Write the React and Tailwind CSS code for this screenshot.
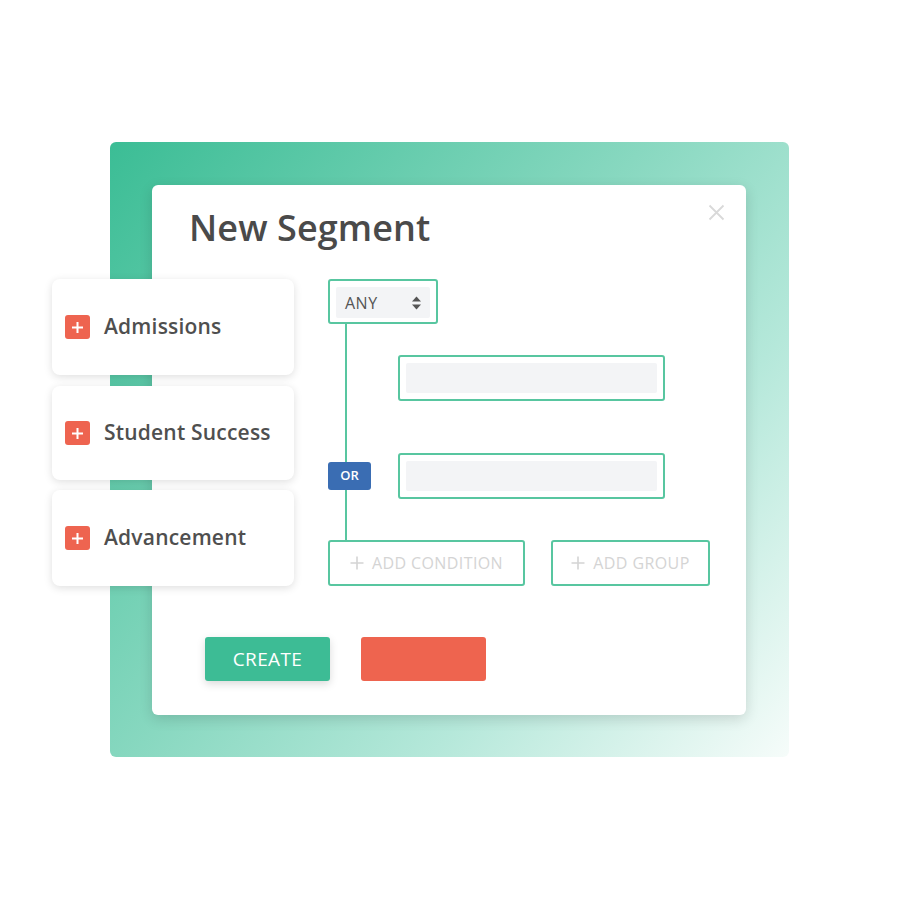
import React from "react";

function PlusBox() {
  return (
    <div className="w-[25px] h-[24px] rounded-[3px] bg-[#ee6450] flex items-center justify-center shrink-0">
      <svg width="13" height="13" viewBox="0 0 13 13">
        <path d="M6.5 1v11M1 6.5h11" stroke="white" strokeWidth="2" strokeLinecap="butt" />
      </svg>
    </div>
  );
}

function Card({ label, h }) {
  return (
    <div
      className={`w-[242px] ${h} bg-white rounded-[8px] shadow-[0_2px_8px_rgba(0,0,0,0.13)] flex items-center pl-[13px] gap-[14px]`}
    >
      <PlusBox />
      <span className="text-[21px] font-semibold text-[#4f4f4f] tracking-[0.2px]">{label}</span>
    </div>
  );
}

function CondBox() {
  return (
    <div className="w-[267px] h-[46px] border-2 border-[#58c6a0] rounded-[3px] p-[6px] bg-white">
      <div className="w-full h-full bg-[#f3f4f6] rounded-[2px]" />
    </div>
  );
}

function AddBtn({ label, w }) {
  return (
    <div
      className={`${w} h-[46px] border-2 border-[#58c6a0] rounded-[3px] flex items-center justify-center gap-[8px] text-[#d4d4d4] text-[16px] font-medium bg-white`}
    >
      <svg width="14" height="14" viewBox="0 0 14 14">
        <path d="M7 0.5v13M0.5 7h13" stroke="#d4d4d4" strokeWidth="1.6" />
      </svg>
      <span className="tracking-[0.4px]">{label}</span>
    </div>
  );
}

export default function App() {
  return (
    <div
      className="relative w-[900px] h-[900px] bg-white overflow-hidden pt-[142px] pl-[110px]"
      style={{ fontFamily: '"Open Sans", "Noto Sans", sans-serif' }}
    >
      <div className="w-[679px] h-[615px] rounded-[6px] p-[42px] pt-[43px] bg-[linear-gradient(130deg,#3bbd95_0%,#88d8c0_45%,#b5e8da_70%,#f6fcfa_100%)]">
        <div className="relative w-[594px] h-[530px] bg-white rounded-[6px] shadow-[0_4px_14px_rgba(0,0,0,0.14)] pt-[22px]">
          <div className="absolute right-[21px] top-[19px]">
            <svg width="17" height="17" viewBox="0 0 17 17">
              <path d="M1.5 1.5l14 14M15.5 1.5l-14 14" stroke="#d9d9d9" strokeWidth="1.8" />
            </svg>
          </div>
          <h1 className="pl-[37px] text-[36px] leading-[42px] font-semibold text-[#4a4a4a] tracking-[0.1px]">
            New Segment
          </h1>

          <div className="relative ml-[176px] mt-[30px] w-[382px]">
            <div className="absolute left-[17px] top-[44px] w-[2px] h-[218px] bg-[#58c6a0]" />
            <div className="relative w-[110px] h-[45px] border-2 border-[#58c6a0] rounded-[3px] pt-[6px] pl-[6px] pr-[6px] pb-[4px] bg-white">
              <div className="h-full bg-[#f3f4f6] rounded-[2px] flex items-center justify-between pl-[9px] pr-[8px]">
                <span className="text-[16px] font-medium text-[#555555] tracking-[0.5px]">ANY</span>
                <svg width="11" height="16" viewBox="0 0 11 16">
                  <path d="M5.5 1.5L10 6.5H1z" fill="#555555" />
                  <path d="M5.5 14.5L10 9.5H1z" fill="#555555" />
                </svg>
              </div>
            </div>
            <div className="relative mt-[31px] ml-[70px]">
              <CondBox />
            </div>
            <div className="relative mt-[52px] flex items-center">
              <div className="w-[43px] h-[28px] rounded-[3px] bg-[#3a6db3] flex items-center justify-center text-white text-[13px] font-semibold">
                OR
              </div>
              <div className="ml-[27px]">
                <CondBox />
              </div>
            </div>
            <div className="relative mt-[41px] flex gap-[26px]">
              <AddBtn label="ADD CONDITION" w="w-[197px]" />
              <AddBtn label="ADD GROUP" w="w-[159px]" />
            </div>
          </div>

          <div className="flex gap-[31px] ml-[53px] mt-[51px]">
            <div className="w-[125px] h-[44px] rounded-[3px] bg-[#3dbc95] shadow-[0_3px_8px_rgba(0,0,0,0.15)] flex items-center justify-center text-white text-[19px] tracking-[0.4px]">
              CREATE
            </div>
            <div className="w-[125px] h-[44px] rounded-[3px] bg-[#ee644f]" />
          </div>
        </div>
      </div>

      <div className="absolute left-[52px] top-[279px] flex flex-col">
        <Card label="Admissions" h="h-[96px]" />
        <div className="h-[11px]" />
        <Card label="Student Success" h="h-[94px]" />
        <div className="h-[10px]" />
        <Card label="Advancement" h="h-[96px]" />
      </div>
    </div>
  );
}
